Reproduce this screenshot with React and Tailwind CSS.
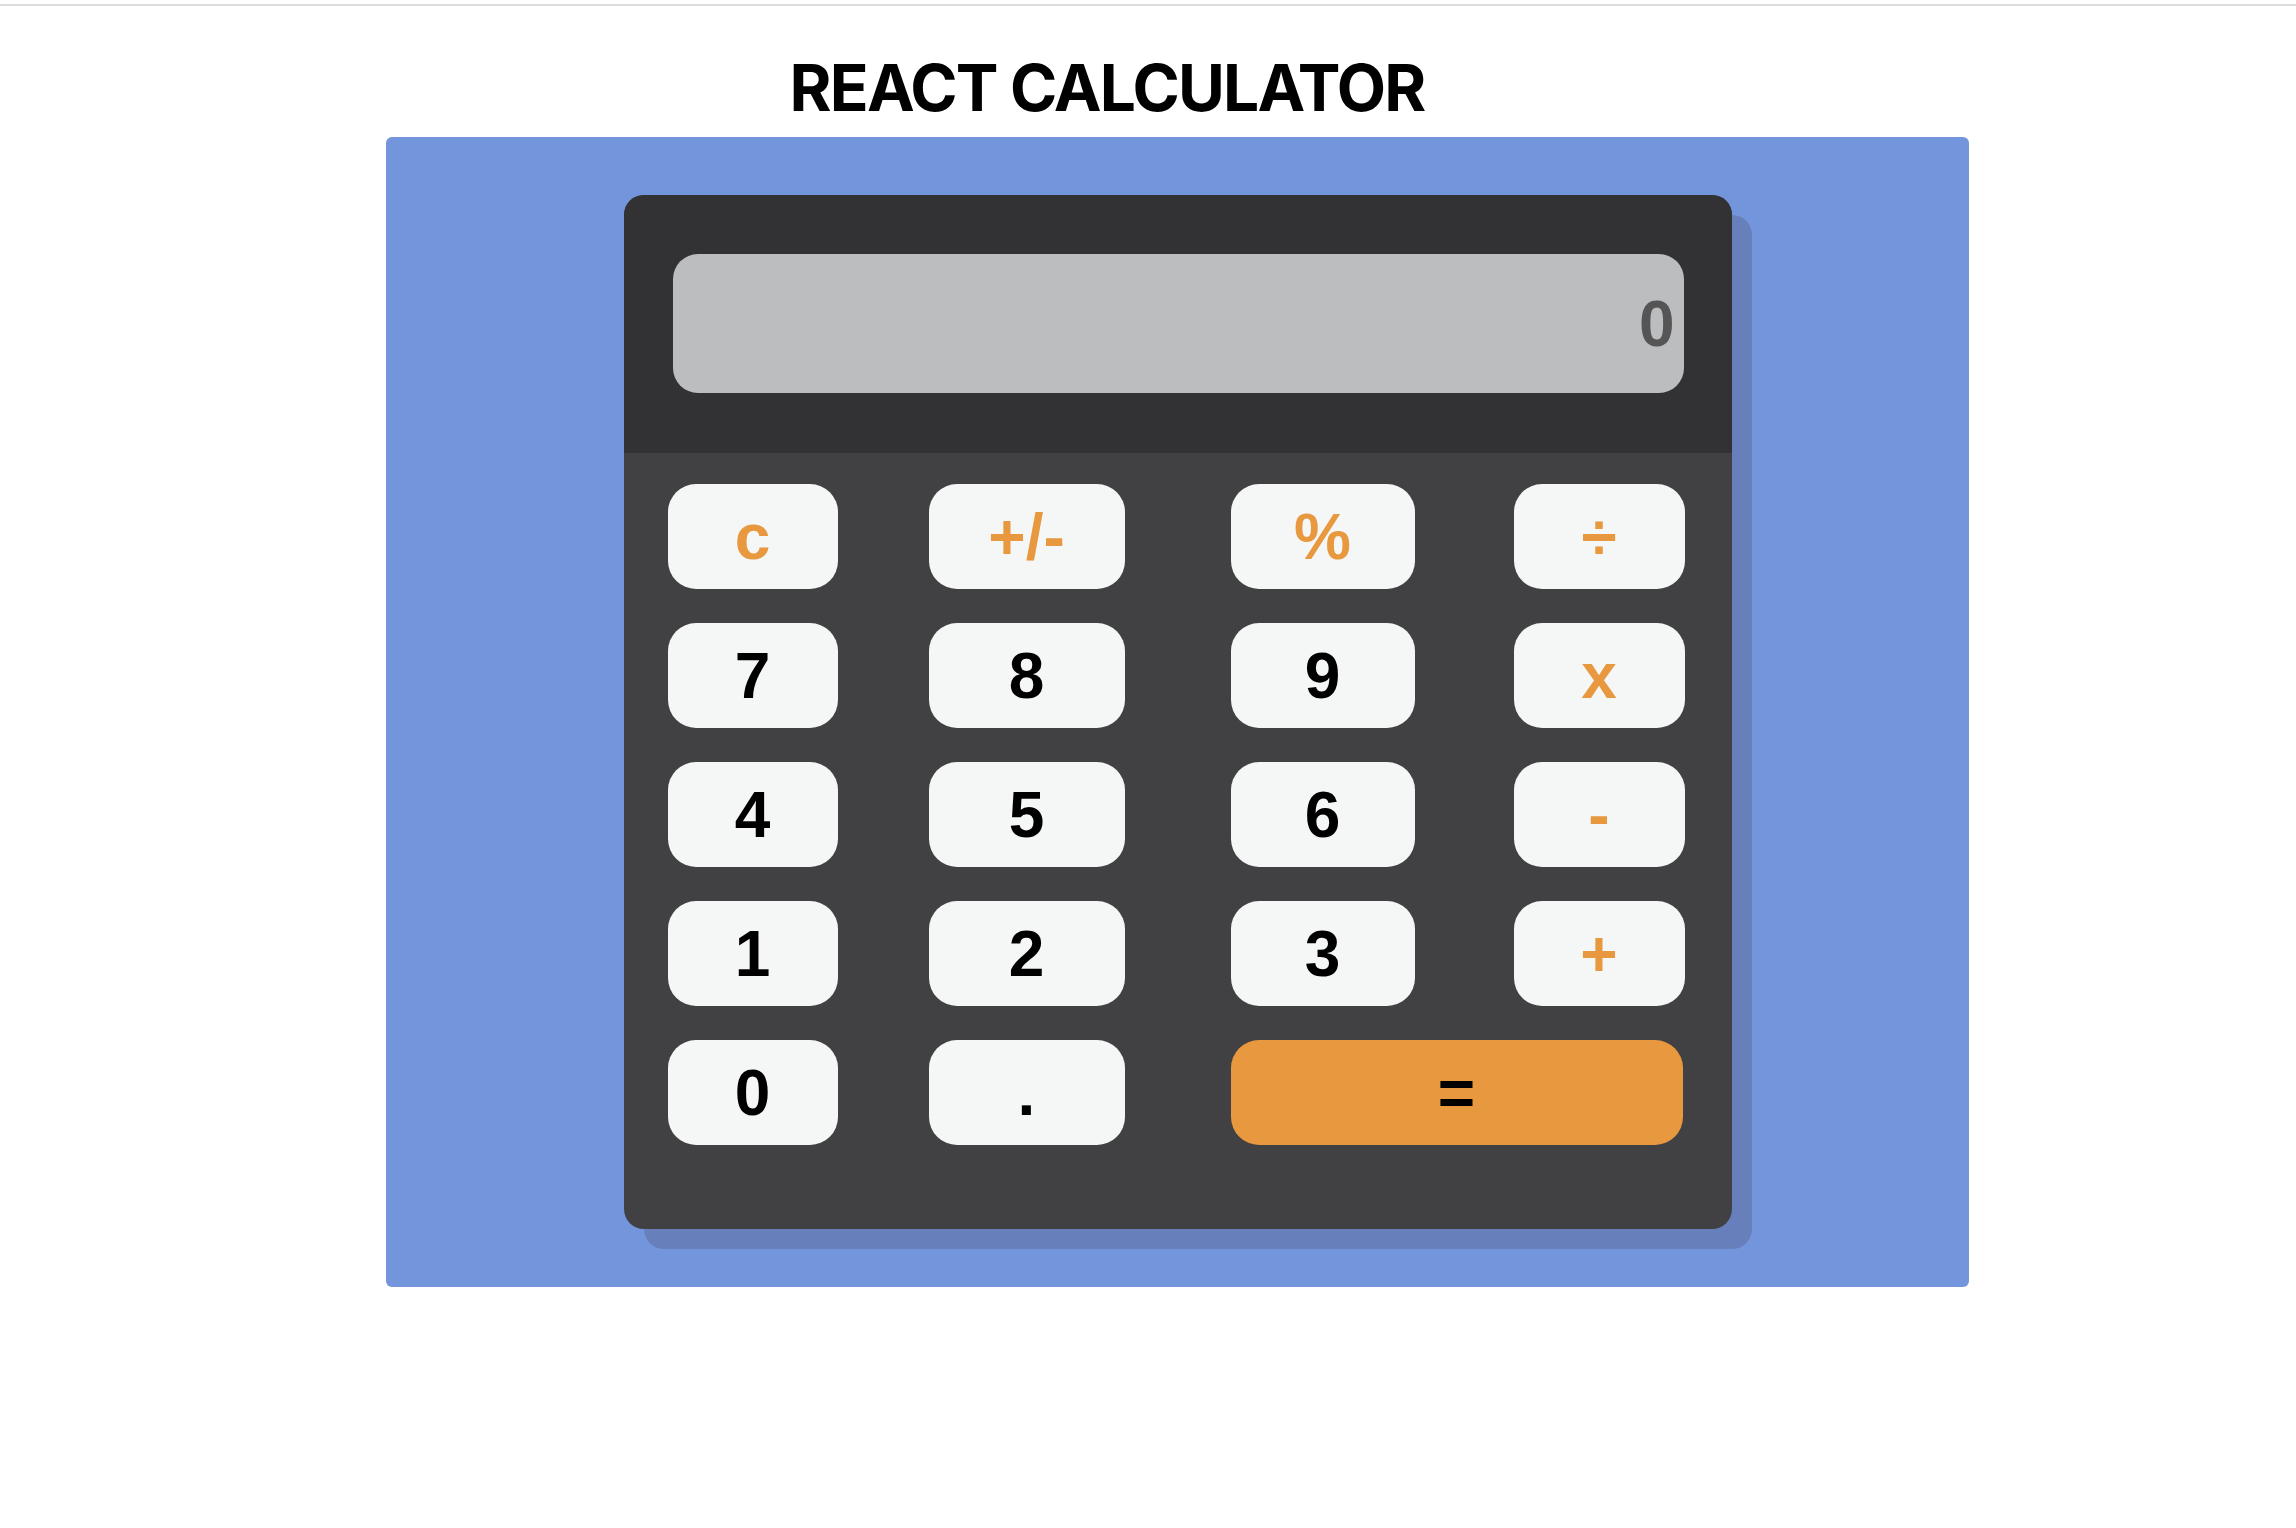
import React, { useState } from 'react';

// Key layout: each row has four slots; "=" takes the last two.
const keys = [
  { label: 'c', kind: 'op' },
  { label: '+/-', kind: 'op' },
  { label: '%', kind: 'op' },
  { label: '÷', kind: 'op' },
  { label: '7' },
  { label: '8' },
  { label: '9' },
  { label: 'x', kind: 'op' },
  { label: '4' },
  { label: '5' },
  { label: '6' },
  { label: '-', kind: 'op' },
  { label: '1' },
  { label: '2' },
  { label: '3' },
  { label: '+', kind: 'op' },
  { label: '0' },
  { label: '.' },
  { label: '=', kind: 'equals' },
];

// widths of the keys in each column
const colWidths = ['w-[170px]', 'w-[196px]', 'w-[184px]', 'w-[171px]'];

const Key = ({ label, kind, col }) => {
  if (kind === 'equals') {
    return (
      <button className="col-span-2 w-[452px] h-[105px] rounded-[28px] bg-[#e8983e] text-black text-[64px] font-bold leading-none flex items-center justify-center">
        {label}
      </button>
    );
  }
  return (
    <button
      className={`${colWidths[col]} h-[105px] rounded-[28px] bg-[#f5f7f6] text-[64px] font-bold leading-none flex items-center justify-center ${
        kind === 'op' ? 'text-[#e8983e]' : 'text-black'
      }`}
    >
      {label}
    </button>
  );
};

export default function App() {
  const [display] = useState('0');

  return (
    <div className="min-h-screen bg-white" style={{ fontFamily: '"Liberation Sans", Arial, sans-serif' }}>
      <div className="pt-1">
        <div className="h-[2px] bg-[#dcdcdc]" />
      </div>

      <h1
        className="mt-[50px] pr-[82px] text-center text-[64px] leading-none font-bold text-black tracking-[-0.028em]"
        style={{ fontFamily: 'Inter, "Liberation Sans", sans-serif' }}
      >
        REACT CALCULATOR
      </h1>

      <div className="mt-[17px] ml-[386px] w-[1583px] bg-[#7395db] rounded-md py-[58px] flex justify-center">
        <div className="w-[1108px] rounded-[20px] bg-[#414143] shadow-[20px_20px_0_#6780bc] overflow-hidden">
          {/* screen */}
          <div className="bg-[#323234] pt-[59px] pb-[60px] pl-[49px] pr-[48px]">
            <div className="h-[139px] rounded-[25px] bg-[#bcbdbf] flex items-center justify-end pr-[9px] text-[64px] font-bold leading-none text-[#555555]">
              {display}
            </div>
          </div>

          {/* keypad */}
          <div className="pt-[31px] pb-[84px] pl-[44px] grid grid-cols-[261px_302px_283px_171px] gap-y-[34px]">
            {keys.map((k, i) => (
              <Key key={k.label} label={k.label} kind={k.kind} col={i % 4} />
            ))}
          </div>
        </div>
      </div>
    </div>
  );
}
